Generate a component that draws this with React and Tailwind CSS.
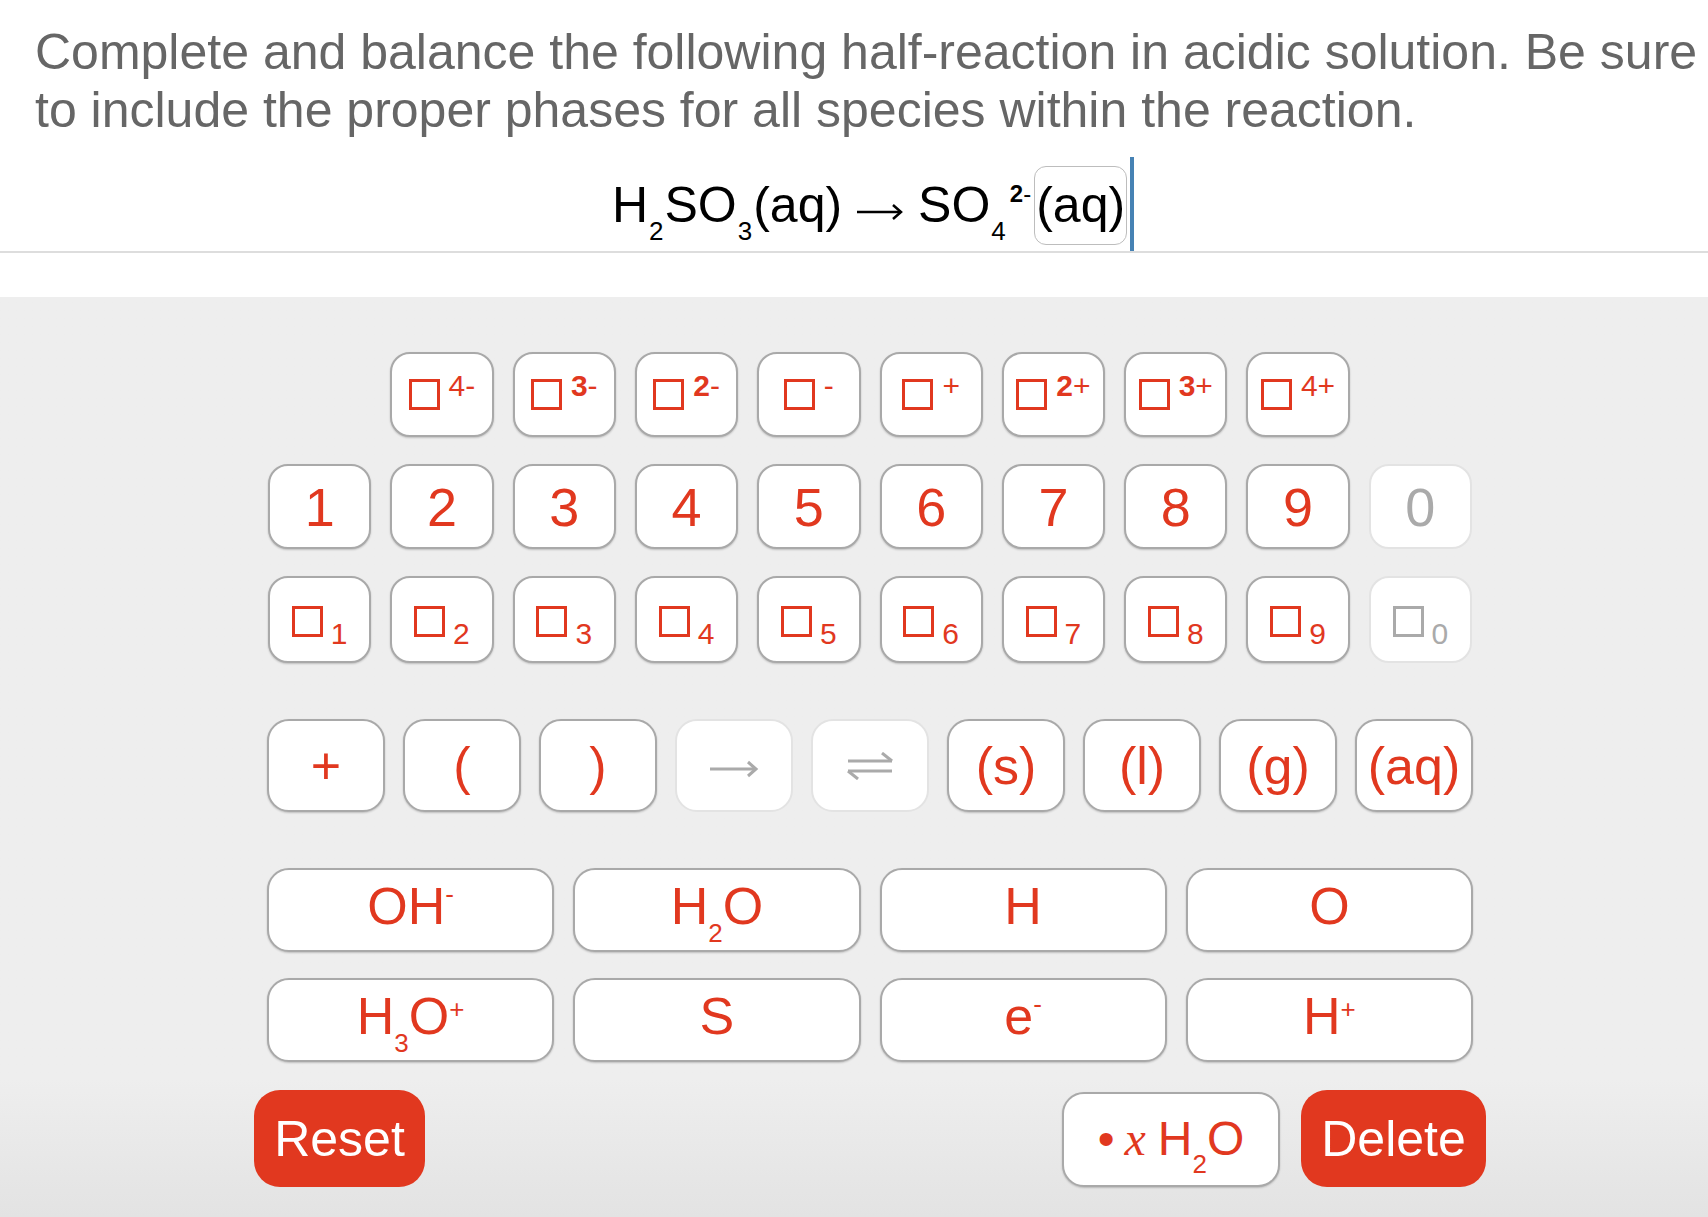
import React from 'react';

// one keypad button; muted = the disabled-looking grey ones
function Key({ children, className = '', muted = false }) {
  return (
    <div
      className={`flex items-center justify-center bg-white leading-none border-2 ${
        muted
          ? 'border-[#e3e3e3] text-[#aaaaaa]'
          : 'border-[#a9a9a9] text-[#e1381f] shadow-[0_1px_2px_rgba(0,0,0,0.2)]'
      } ${className}`}
    >
      {children}
    </div>
  );
}

function Box({ muted = false }) {
  return (
    <span
      className={`block w-[31px] h-[31px] border-[3px] ${
        muted ? 'border-[#aaaaaa]' : 'border-[#e1381f]'
      }`}
    />
  );
}

const charges = [
  { n: '4', s: '-' },
  { n: '3', s: '-', bold: true },
  { n: '2', s: '-', bold: true },
  { n: '', s: '-' },
  { n: '', s: '+' },
  { n: '2', s: '+', bold: true },
  { n: '3', s: '+', bold: true },
  { n: '4', s: '+' },
];

const digits = ['1', '2', '3', '4', '5', '6', '7', '8', '9'];

function Sub({ children, className = '' }) {
  return <span className={`text-[26px] leading-[0] align-[-18px] ${className}`}>{children}</span>;
}

function Sup({ children, className = '' }) {
  return <span className={`text-[26px] leading-[0] align-[16px] ${className}`}>{children}</span>;
}

function ArrowIcon({ color = '#aaaaaa', width = 50, stroke = 3 }) {
  return (
    <svg width={width} height="20" viewBox={`0 0 ${width} 20`} fill="none" stroke={color} strokeWidth={stroke}>
      <line x1="1" y1="10" x2={width - 3} y2="10" />
      <polyline points={`${width - 11},3 ${width - 3},10 ${width - 11},17`} />
    </svg>
  );
}

function EquilibriumIcon() {
  return (
    <svg width="48" height="28" viewBox="0 0 48 28" fill="none" stroke="#aaaaaa" strokeWidth="3">
      <line x1="2" y1="9" x2="46" y2="9" />
      <line x1="46" y1="9" x2="36" y2="1" />
      <line x1="2" y1="19" x2="46" y2="19" />
      <line x1="2" y1="19" x2="12" y2="27" />
    </svg>
  );
}

export default function App() {
  return (
    <div className="w-full min-h-[1217px] flex flex-col bg-white font-['Liberation_Sans',Arial,sans-serif]">
      {/* question */}
      <div className="pt-[23px] pl-[35px] text-[50px] leading-[58px] text-[#666666] whitespace-nowrap">
        Complete and balance the following half-reaction in acidic solution. Be sure
        <br />
        to include the proper phases for all species within the reaction.
      </div>

      {/* equation being typed */}
      <div className="h-[112px] flex items-end justify-center pl-[38px]">
        <div className="text-[50px] leading-[57px] text-black whitespace-nowrap">
          H<span className="text-[26px] leading-[0] align-[-18px] mx-[1px]">2</span>SO
          <span className="text-[26px] leading-[0] align-[-18px] mx-[1px]">3</span>(aq)
          <span className="inline-block mx-[14px] align-[0px]">
            <ArrowIcon color="#000000" width={48} stroke={2.5} />
          </span>
          SO
          <span className="text-[26px] leading-[0] align-[-18px] ml-[1px] mr-[4px]">4</span>
          <span className="text-[24px] leading-[0] align-[20px]">
            <b>2</b>-
          </span>
          <span className="inline-block ml-[3px] px-[1px] py-[10px] border-[1.5px] border-[#bdbdbd] rounded-[12px]">
            (aq)
          </span>
          <span className="inline-block ml-[3px] w-[4px] h-[94px] bg-[#4682b4] align-[-29px]" />
        </div>
      </div>
      <div className="h-[2px] bg-[#dddddd]" />
      <div className="h-[44px]" />

      {/* keypad */}
      <div className="flex-1 pt-[55px] bg-linear-to-b from-[#eeeeee] from-85% to-[#e3e3e3]">
        <div className="ml-[254px] w-[1232px]">
          <div className="mx-[14px] flex flex-col gap-[27px]">
            <div className="grid grid-cols-10 gap-x-[19px]">
              {charges.map((c, i) => (
                <Key key={c.n + c.s} className={`h-[85px] rounded-[20px] ${i === 0 ? 'col-start-2' : ''}`}>
                  <div className="flex items-start">
                    <Box />
                    <span className="ml-[9px] -mt-[8px] text-[30px] leading-none">
                      {c.bold ? <b>{c.n}</b> : c.n}
                      {c.s}
                    </span>
                  </div>
                </Key>
              ))}
            </div>

            <div className="grid grid-cols-10 gap-x-[19px]">
              {digits.map((d) => (
                <Key key={'d' + d} className="h-[85px] rounded-[20px] text-[54px]">
                  {d}
                </Key>
              ))}
              <Key muted className="h-[85px] rounded-[20px] text-[54px]">
                0
              </Key>
            </div>

            <div className="grid grid-cols-10 gap-x-[19px]">
              {digits.map((d) => (
                <Key key={'s' + d} className="h-[87px] rounded-[20px]">
                  <div className="flex items-end mt-[4px]">
                    <Box />
                    <span className="ml-[8px] -mb-[12px] text-[30px] leading-none">{d}</span>
                  </div>
                </Key>
              ))}
              <Key muted className="h-[87px] rounded-[20px]">
                <div className="flex items-end mt-[4px]">
                  <Box muted />
                  <span className="ml-[8px] -mb-[12px] text-[30px] leading-none">0</span>
                </div>
              </Key>
            </div>
          </div>

          <div className="mt-[56px] mx-[13px] grid grid-cols-9 gap-x-[18px] text-[52px]">
            <Key className="h-[93px] rounded-[22px]">+</Key>
            <Key className="h-[93px] rounded-[22px]">(</Key>
            <Key className="h-[93px] rounded-[22px]">)</Key>
            <Key muted className="h-[93px] rounded-[22px] pt-[6px]">
              <ArrowIcon />
            </Key>
            <Key muted className="h-[93px] rounded-[22px]">
              <EquilibriumIcon />
            </Key>
            <Key className="h-[93px] rounded-[22px]">(s)</Key>
            <Key className="h-[93px] rounded-[22px]">(l)</Key>
            <Key className="h-[93px] rounded-[22px]">(g)</Key>
            <Key className="h-[93px] rounded-[22px]">(aq)</Key>
          </div>

          <div className="mt-[56px] mx-[13px] grid grid-cols-4 gap-x-[19px] gap-y-[26px] text-[52px]">
            <Key className="h-[84px] rounded-[22px] pb-[8px]">
              <span>
                OH<Sup className="align-[21px]">-</Sup>
              </span>
            </Key>
            <Key className="h-[84px] rounded-[22px] pb-[8px]">
              <span>
                H<Sub>2</Sub>O
              </span>
            </Key>
            <Key className="h-[84px] rounded-[22px] pb-[8px]">H</Key>
            <Key className="h-[84px] rounded-[22px] pb-[8px]">O</Key>
            <Key className="h-[84px] rounded-[22px] pb-[8px]">
              <span>
                H<Sub>3</Sub>O<Sup>+</Sup>
              </span>
            </Key>
            <Key className="h-[84px] rounded-[22px] pb-[8px]">S</Key>
            <Key className="h-[84px] rounded-[22px] pb-[8px]">
              <span>
                e<Sup className="align-[21px]">-</Sup>
              </span>
            </Key>
            <Key className="h-[84px] rounded-[22px] pb-[8px]">
              <span>
                H<Sup>+</Sup>
              </span>
            </Key>
          </div>

          <div className="mt-[28px] flex items-start">
            <button className="w-[171px] h-[97px] rounded-[26px] bg-[#e1381f] text-white text-[50px] leading-none">
              Reset
            </button>
            <div className="flex-1" />
            <Key className="mt-[2px] w-[218px] h-[95px] rounded-[22px] text-[48px]">
              <span className="whitespace-nowrap">
                <span className="text-[48px] leading-[0] mr-[10px]">•</span>
                <span className="font-['Liberation_Serif',serif] italic mr-[12px]">x</span>H<Sub>2</Sub>O
              </span>
            </Key>
            <button className="ml-[21px] w-[185px] h-[97px] rounded-[26px] bg-[#e1381f] text-white text-[50px] leading-none">
              Delete
            </button>
          </div>
        </div>
      </div>
    </div>
  );
}
